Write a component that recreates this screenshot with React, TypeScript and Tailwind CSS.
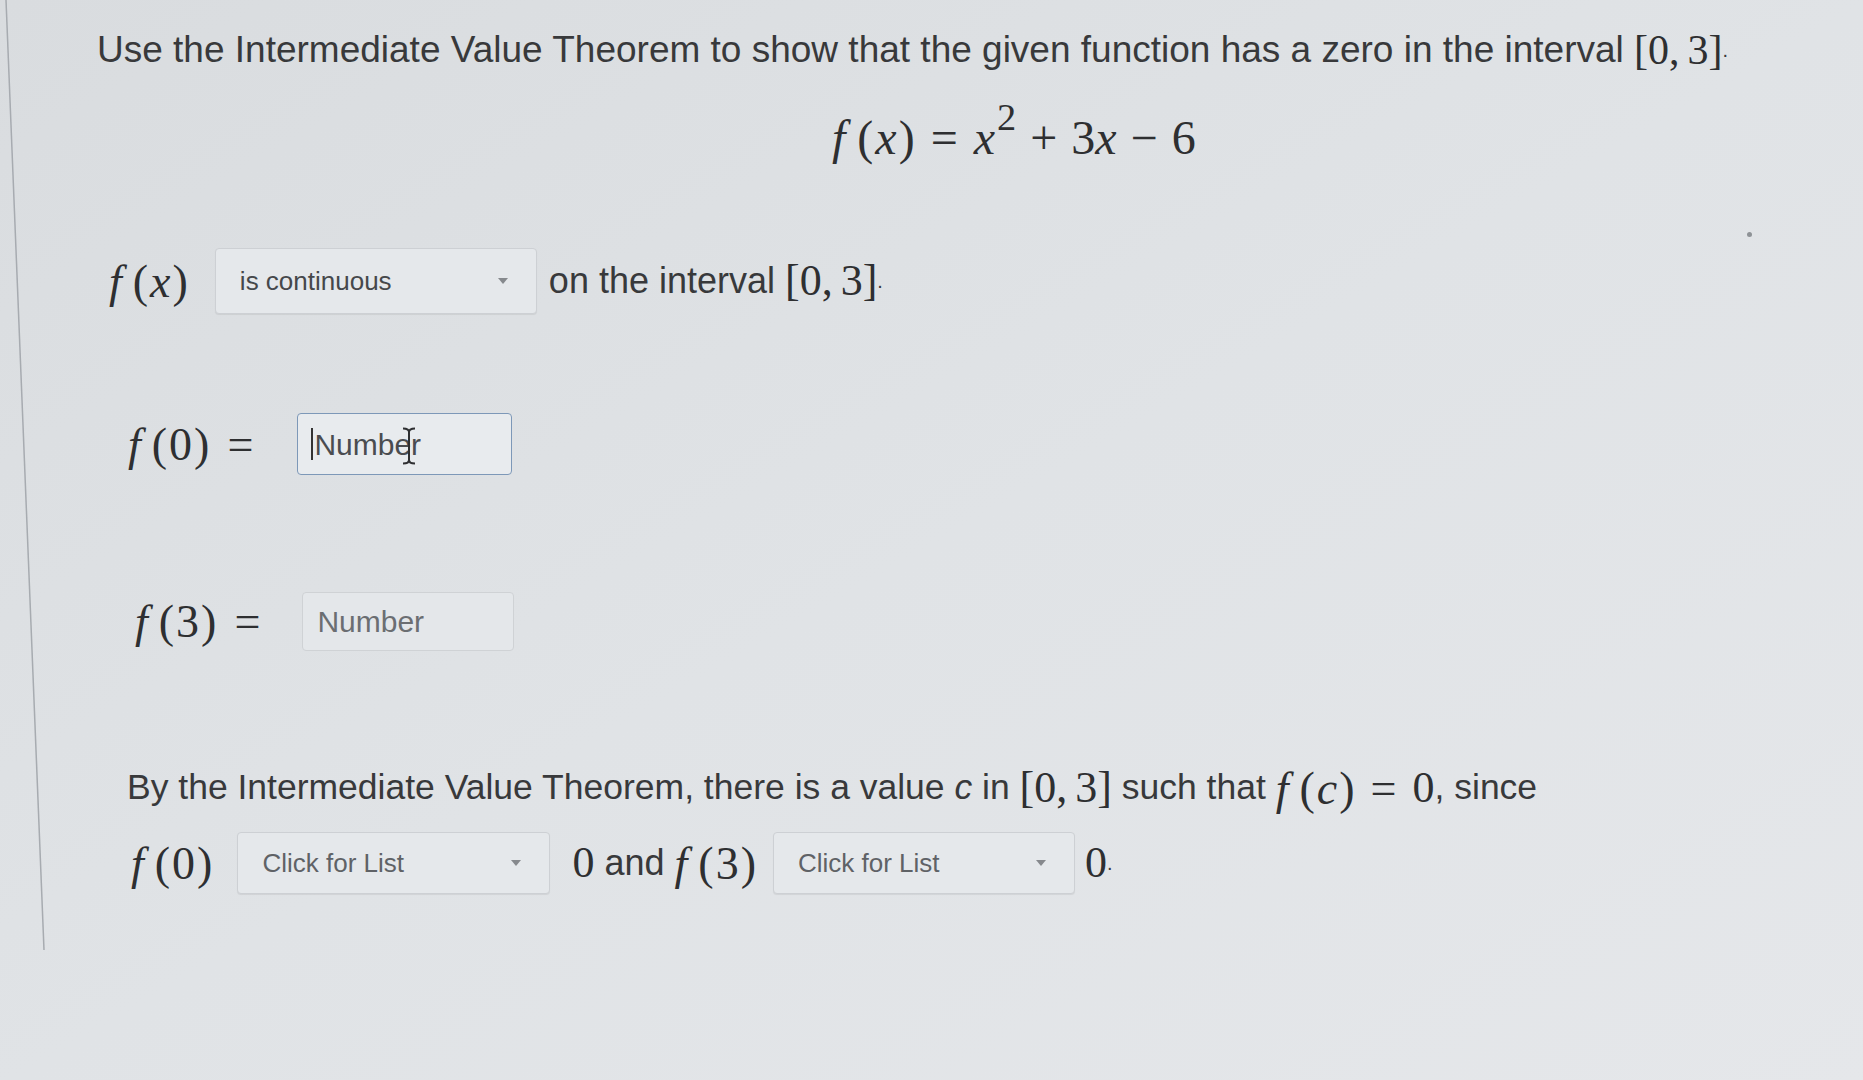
import React from "react";

const serif = "font-['Liberation_Serif',serif] text-[#2e2f31]";

function Arrow() {
  return (
    <svg width="10" height="6" viewBox="0 0 10 6" className="shrink-0">
      <path d="M0 0 L10 0 L5 6 Z" fill="#86898d" />
    </svg>
  );
}

function Select({ label, className, tone }: { label: string; className: string; tone: string }) {
  return (
    <div
      className={`flex items-center justify-between rounded-[4px] border border-[#cdd0d4] bg-[#e5e8eb] pl-[24px] pr-[28px] shadow-[0_1px_1px_rgba(0,0,0,0.07)] ${className}`}
    >
      <span className={`text-[26px] ${tone}`}>{label}</span>
      <Arrow />
    </div>
  );
}

function V({ children }: { children: React.ReactNode }) {
  return <span className="italic">{children}</span>;
}

// f(arg) the way the math renderer spaces it
function F({ arg }: { arg: string }) {
  return (
    <span className={`${serif} text-[46px] whitespace-nowrap`}>
      <V>f</V>
      <span className="ml-[11px]">(</span>
      <span className="mx-[2px]">{arg === "x" || arg === "c" ? <V>{arg}</V> : arg}</span>
      <span>)</span>
    </span>
  );
}

function Interval({ size }: { size: string }) {
  return (
    <span className={`${serif} ${size} whitespace-nowrap`}>
      [0,<span className="ml-[8px]">3</span>]
    </span>
  );
}

export default function App() {
  return (
    <div className="relative min-h-screen w-full overflow-hidden bg-gradient-to-br from-[#d9dcdf] via-[#e0e3e6] to-[#e5e7ea] font-['Liberation_Sans',Arial,sans-serif] text-[#38393b]">
      <svg className="pointer-events-none absolute left-0 top-0" width="60" height="960">
        <line x1="6" y1="0" x2="44" y2="950" stroke="#a7abb0" strokeWidth="1.5" />
      </svg>
      <div className="pointer-events-none absolute left-[1747px] top-[232px] h-[5px] w-[5px] rounded-full bg-[#8e9296]" />

      <div className="flex flex-col pt-[26px]">
        {/* question */}
        <div className="flex h-[48px] items-center pl-[97px] text-[37px]">
          <span>Use the Intermediate Value Theorem to show that the given function has a zero in the interval&nbsp;</span>
          <Interval size="text-[42px]" />
          <span className="text-[20px]">.</span>
        </div>

        <div className={`mt-[36px] flex h-[56px] items-center pl-[832px] ${serif} text-[48px]`}>
          <V>f</V>
          <span className="ml-[12px]">(</span>
          <span className="mx-[2px]">
            <V>x</V>
          </span>
          <span>)</span>
          <span className="mx-[16px]">=</span>
          <V>x</V>
          <sup className="top-[-0.55em] ml-[2px] text-[0.8em]">2</sup>
          <span className="mx-[14px]">+</span>
          <span>3</span>
          <V>x</V>
          <span className="mx-[14px]">−</span>
          <span>6</span>
        </div>

        {/* continuity */}
        <div className="mt-[82px] flex h-[66px] items-center pl-[109px]">
          <F arg="x" />
          <Select label="is continuous" tone="text-[#46484b]" className="ml-[27px] h-[66px] w-[322px]" />
          <span className="ml-[12px] text-[36px]">on the interval&nbsp;</span>
          <Interval size="text-[44px]" />
          <span className="text-[20px]">.</span>
        </div>

        {/* f(0) */}
        <div className="mt-[99px] flex h-[62px] items-center pl-[128px]">
          <F arg="0" />
          <span className={`ml-[18px] ${serif} text-[46px]`}>=</span>
          <div className="relative ml-[44px] flex h-[62px] w-[215px] items-center rounded-[4px] border-[1.5px] border-[#7d98b8] bg-[#e8ebee] pl-[13px]">
            <span className="mr-[1px] h-[32px] w-[2px] bg-[#333]" />
            <span className="text-[30px] text-[#4a4c50]">Number</span>
            <svg className="absolute left-[104px] top-[13px]" width="14" height="38" viewBox="0 0 14 38">
              <path d="M1 1.5 Q7 1.5 7 5 Q7 1.5 13 1.5 M7 5 V33 M1 36.5 Q7 36.5 7 33 Q7 36.5 13 36.5" stroke="#2e2f31" strokeWidth="2" fill="none" />
            </svg>
          </div>
        </div>

        {/* f(3) */}
        <div className="mt-[117px] flex h-[59px] items-center pl-[135px]">
          <F arg="3" />
          <span className={`ml-[18px] ${serif} text-[46px]`}>=</span>
          <div className="ml-[42px] flex h-[59px] w-[212px] items-center rounded-[4px] border border-[#cfd2d5] bg-[#e4e7ea] pl-[14px]">
            <span className="text-[30px] text-[#6b6e72]">Number</span>
          </div>
        </div>

        {/* conclusion */}
        <div className="mt-[113px] flex h-[48px] items-center pl-[127px] text-[35.5px]">
          <span>By the Intermediate Value Theorem, there is a value&nbsp;</span>
          <span className="italic">c</span>
          <span>&nbsp;in&nbsp;</span>
          <Interval size="text-[44px]" />
          <span>&nbsp;such that&nbsp;</span>
          <F arg="c" />
          <span className={`mx-[16px] ${serif} text-[46px]`}>=</span>
          <span className={`${serif} text-[44px]`}>0</span>
          <span>, since</span>
        </div>

        <div className="mt-[18px] flex h-[66px] items-center pl-[131px]">
          <F arg="0" />
          <Select label="Click for List" tone="text-[#5f6266]" className="ml-[25px] h-[62px] w-[313px]" />
          <span className={`ml-[22px] ${serif} text-[44px]`}>0</span>
          <span className="text-[36px]">&nbsp;and&nbsp;</span>
          <F arg="3" />
          <Select label="Click for List" tone="text-[#5f6266]" className="ml-[17px] h-[62px] w-[302px]" />
          <span className={`ml-[10px] ${serif} text-[44px]`}>0</span>
          <span className="text-[20px]">.</span>
        </div>
      </div>
    </div>
  );
}
